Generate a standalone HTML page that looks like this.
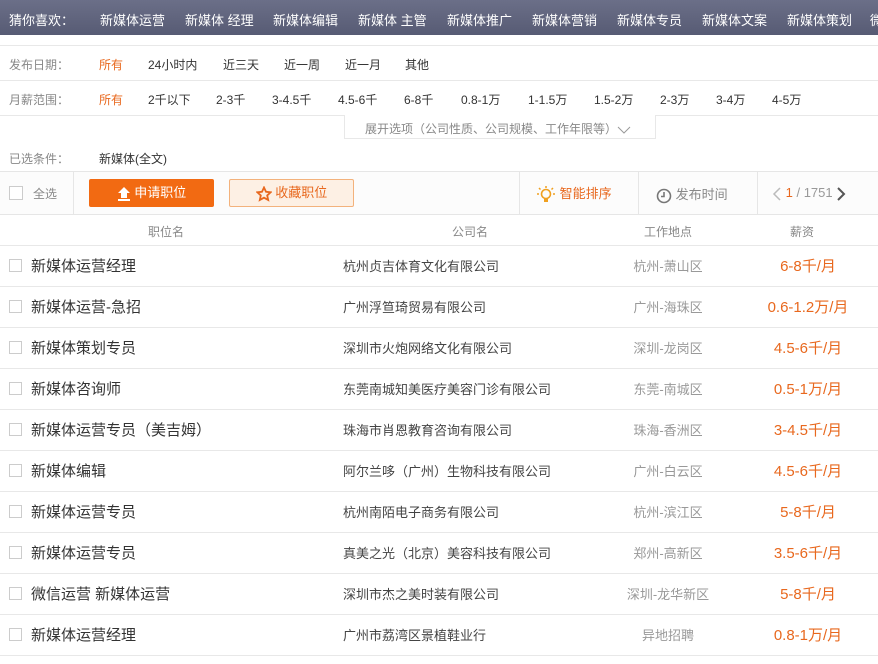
<!DOCTYPE html>
<html><head><meta charset="utf-8"><style>
*{margin:0;padding:0;box-sizing:border-box}
body{width:878px;height:664px;overflow:hidden;background:#fff;font-family:"Liberation Sans","Noto Sans CJK SC",sans-serif;color:#333;position:relative}
.nav{position:absolute;left:0;top:0;width:878px;height:35px;background:linear-gradient(#6b6f88,#575b74);color:#fff;font-size:13px}
.nav span{position:absolute;top:10px;white-space:nowrap}
.line{position:absolute;left:0;width:878px;height:1px;background:#e8e8e8}
.t{position:absolute;white-space:nowrap;font-size:12px}
.lab{color:#888}
.or{color:#e8681e}
.row .cb{position:absolute;left:9px;width:13px;height:13px;border:1px solid #ccc}
svg{vertical-align:middle}
</style></head><body>
<div class="nav">
<span style="left:9px">猜你喜欢：</span>
<span style="left:100px">新媒体运营</span><span style="left:185px">新媒体 经理</span><span style="left:273px">新媒体编辑</span><span style="left:358px">新媒体 主管</span><span style="left:447px">新媒体推广</span><span style="left:532px">新媒体营销</span><span style="left:617px">新媒体专员</span><span style="left:702px">新媒体文案</span><span style="left:787px">新媒体策划</span><span style="left:870px">微</span>
</div>
<div class="line" style="top:45px"></div>
<div class="t lab" style="left:9px;top:56px">发布日期：</div>
<div class="t or" style="left:99px;top:56px">所有</div>
<div class="t" style="left:148px;top:56px">24小时内</div>
<div class="t" style="left:223px;top:56px">近三天</div>
<div class="t" style="left:284px;top:56px">近一周</div>
<div class="t" style="left:345px;top:56px">近一月</div>
<div class="t" style="left:405px;top:56px">其他</div>
<div class="line" style="top:80px"></div>
<div class="t lab" style="left:9px;top:91px">月薪范围：</div>
<div class="t or" style="left:99px;top:91px">所有</div>
<div class="t" style="left:148px;top:91px">2千以下</div>
<div class="t" style="left:216px;top:91px">2-3千</div>
<div class="t" style="left:272px;top:91px">3-4.5千</div>
<div class="t" style="left:338px;top:91px">4.5-6千</div>
<div class="t" style="left:404px;top:91px">6-8千</div>
<div class="t" style="left:461px;top:91px">0.8-1万</div>
<div class="t" style="left:528px;top:91px">1-1.5万</div>
<div class="t" style="left:594px;top:91px">1.5-2万</div>
<div class="t" style="left:660px;top:91px">2-3万</div>
<div class="t" style="left:716px;top:91px">3-4万</div>
<div class="t" style="left:772px;top:91px">4-5万</div>
<div class="line" style="top:115px"></div>
<div style="position:absolute;left:344px;top:115px;width:312px;height:24px;border:1px solid #e8e8e8;border-top:none;background:#fff"></div>
<div class="t" style="left:365px;top:120px;color:#888">展开选项（公司性质、公司规模、工作年限等）<svg width="14" height="10"><path d="M1 2l6 6 6-6" stroke="#999" fill="none"/></svg></div>
<div class="t lab" style="left:9px;top:150px">已选条件：</div>
<div class="t" style="left:99px;top:150px">新媒体(全文)</div>
<div style="position:absolute;left:0;top:171px;width:878px;height:44px;background:#fcfcfc;border-top:1px solid #e6e6e6;border-bottom:1px solid #e6e6e6"></div>
<div style="position:absolute;left:73px;top:172px;width:1px;height:42px;background:#e6e6e6"></div>
<div style="position:absolute;left:519px;top:172px;width:1px;height:42px;background:#e6e6e6"></div>
<div style="position:absolute;left:638px;top:172px;width:1px;height:42px;background:#e6e6e6"></div>
<div style="position:absolute;left:757px;top:172px;width:1px;height:42px;background:#e6e6e6"></div>
<div style="position:absolute;left:9px;top:186px;width:14px;height:14px;border:1px solid #ccc;background:#fff"></div>
<div class="t lab" style="left:33px;top:185px">全选</div>
<div style="position:absolute;left:89px;top:179px;width:125px;height:28px;background:#f26a12;border-radius:2px;color:#fff;font-size:13px;text-align:center;line-height:28px"><svg width="14" height="16"><path d="M7 1L1 7h3v5h6V7h3z" fill="#fff"/><rect x="1" y="13" width="12" height="2" fill="#fff"/></svg> 申请职位</div>
<div style="position:absolute;left:229px;top:179px;width:125px;height:28px;background:#fdf0e4;border:1px solid #f3b27c;border-radius:2px;color:#e8681e;font-size:13px;text-align:center;line-height:26px"><svg width="16" height="16"><path d="M8 1.5l2 4.3 4.6.5-3.4 3.1 1 4.6L8 11.7 3.8 14l1-4.6L1.4 6.3l4.6-.5z" fill="none" stroke="#e8681e" stroke-width="1.8"/></svg> 收藏职位</div>
<div class="t or" style="left:536px;top:183px;font-size:13px"><svg width="20" height="20"><circle cx="10" cy="9" r="4.5" fill="none" stroke="#f0a020" stroke-width="1.6"/><rect x="8" y="14" width="4" height="3" fill="#f0a020"/><path d="M10 1v2M3 3l1.5 1.5M17 3l-1.5 1.5M1 9h2M17 9h2" stroke="#f0a020" stroke-width="1.5"/></svg> 智能排序</div>
<div class="t" style="left:656px;top:184px;font-size:13px;color:#888"><svg width="16" height="16"><circle cx="8" cy="8" r="6.5" fill="none" stroke="#777" stroke-width="1.6"/><path d="M8 4v4.5H5" stroke="#777" stroke-width="1.6" fill="none"/></svg> 发布时间</div>
<div class="t" style="left:772px;top:185px;font-size:13px;color:#999"><svg width="10" height="14"><path d="M8 1L2 7l6 6" stroke="#bbb" stroke-width="1.5" fill="none"/></svg> <span class="or">1</span> / 1751 <svg width="10" height="14"><path d="M2 1l6 6-6 6" stroke="#555" stroke-width="2" fill="none"/></svg></div>
<div class="t" style="left:148px;top:223px;color:#888">职位名</div>
<div class="t" style="left:452px;top:223px;color:#888">公司名</div>
<div class="t" style="left:644px;top:223px;color:#888">工作地点</div>
<div class="t" style="left:790px;top:223px;color:#888">薪资</div>
<div class="line" style="top:245px"></div>
<div id="rows"></div>
<script>
var d=[["新媒体运营经理","杭州贞吉体育文化有限公司","杭州-萧山区","6-8千/月"],["新媒体运营-急招","广州浮笪琦贸易有限公司","广州-海珠区","0.6-1.2万/月"],["新媒体策划专员","深圳市火炮网络文化有限公司","深圳-龙岗区","4.5-6千/月"],["新媒体咨询师","东莞南城知美医疗美容门诊有限公司","东莞-南城区","0.5-1万/月"],["新媒体运营专员（美吉姆）","珠海市肖恩教育咨询有限公司","珠海-香洲区","3-4.5千/月"],["新媒体编辑","阿尔兰哆（广州）生物科技有限公司","广州-白云区","4.5-6千/月"],["新媒体运营专员","杭州南陌电子商务有限公司","杭州-滨江区","5-8千/月"],["新媒体运营专员","真美之光（北京）美容科技有限公司","郑州-高新区","3.5-6千/月"],["微信运营 新媒体运营","深圳市杰之美时装有限公司","深圳-龙华新区","5-8千/月"],["新媒体运营经理","广州市荔湾区景植鞋业行","异地招聘","0.8-1万/月"]];
var h="";d.forEach(function(r,i){var y=245+i*41;
h+='<div class="row"><div class="cb" style="top:'+(y+14)+'px"></div>'+
'<div class="t" style="left:31px;top:'+(y+10)+'px;font-size:15px;color:#333">'+r[0]+'</div>'+
'<div class="t" style="left:343px;top:'+(y+11)+'px;font-size:13px;color:#444">'+r[1]+'</div>'+
'<div class="t" style="left:668px;top:'+(y+11)+'px;font-size:13px;color:#999;transform:translateX(-50%)">'+r[2]+'</div>'+
'<div class="t or" style="left:808px;top:'+(y+10)+'px;font-size:15px;transform:translateX(-50%)">'+r[3]+'</div>'+
'<div class="line" style="top:'+(y+41)+'px"></div></div>';});
document.getElementById("rows").innerHTML=h;
</script>
</body></html>
